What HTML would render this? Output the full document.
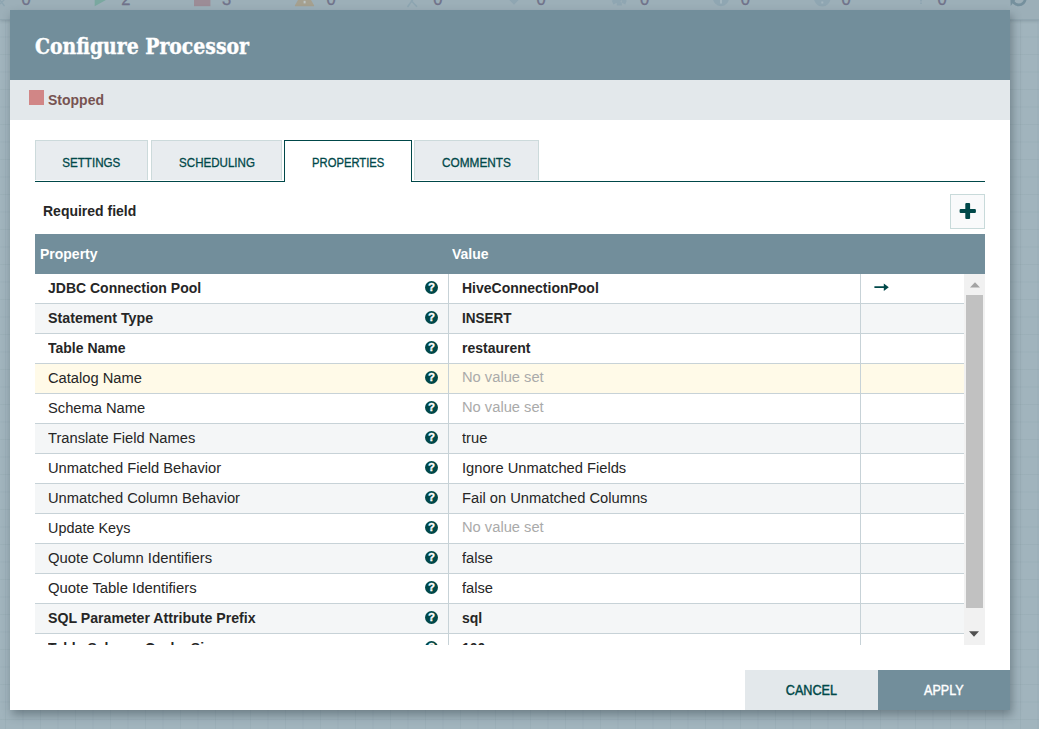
<!DOCTYPE html>
<html lang="en">
<head>
<meta charset="utf-8">
<title>Configure Processor</title>
<style>
*{box-sizing:border-box;margin:0;padding:0}
html,body{width:1039px;height:729px;overflow:hidden}
body{position:relative;font-family:"Liberation Sans",Arial,sans-serif;color:#262626;background:#a1b4bd;
  background-image:
    linear-gradient(to right, rgba(126,150,160,.17) 1px, transparent 1px),
    linear-gradient(to bottom, rgba(126,150,160,.17) 1px, transparent 1px);
  background-size:17.5px 17.5px;
  background-position:5px 1.5px;
}
.abs{position:absolute}
/* top toolbar strip (dimmed by modal glass) */
#strip{left:0;top:0;width:1039px;height:20px;background:#9cafb8;border-bottom:1px solid #91a6b0;box-shadow:0 1px 3px rgba(60,80,90,.25);overflow:hidden}
#strip span{position:absolute;top:-11.4px;font-size:16.5px;line-height:20px;color:#70728a;-webkit-text-stroke:.3px #70728a;margin-left:.9px}
#strip i{position:absolute;display:block}
/* dialog */
#dlg{left:10px;top:10px;width:1000px;height:700px;background:#fff;box-shadow:2px 5px 9px rgba(40,55,62,.42)}
#hdr{left:0;top:0;width:1000px;height:70px;background:#728e9b}
#title{left:25px;top:19.5px;font-family:"DejaVu Serif Condensed","DejaVu Serif","Liberation Serif",serif;font-stretch:condensed;font-weight:bold;font-size:22.5px;line-height:32px;color:#fff;white-space:nowrap;transform:scaleX(.93);transform-origin:0 50%;-webkit-text-stroke:.4px #fff}
#status{left:0;top:70px;width:1000px;height:40px;background:#e3e8eb}
#sq{left:19px;top:80px;width:15px;height:15px;background:#d18686}
#stopped{left:37.5px;top:80px;font-weight:bold;font-size:15.4px;transform:scaleX(.909);transform-origin:0 50%;line-height:20px;color:#775351;white-space:nowrap}
/* tabs */
.tab{top:130px;height:40px;border:1px solid #ccdadb;border-bottom:0;background:#e8ecef;color:#004849;font-size:12.5px;line-height:44px;text-align:center;white-space:nowrap;-webkit-text-stroke:.3px #004849}
.tab span,.btn span{display:inline-block;transform-origin:50% 50%}
.tab.sel{background:#fff;border-color:#004849;height:42px;z-index:2}
#tabline{left:25px;top:171px;width:950px;height:1px;background:#004849}
#req{left:32.5px;top:190px;font-weight:bold;font-size:15.4px;transform:scaleX(.909);transform-origin:0 50%;line-height:22px;white-space:nowrap;color:#262626}
#plus{left:940px;top:184px;width:35px;height:35px;border:1px solid #c8dada;background:#f9fafb}
/* table */
#thead{left:25px;top:224px;width:950px;height:40px;background:#728e9b;color:#fff;font-weight:bold;font-size:14px;line-height:40px}
#thead span{position:absolute;top:0;white-space:nowrap;font-size:15.4px;transform:scaleX(.909);transform-origin:0 50%}
#tbody{left:25px;top:264px;width:950px;height:370.5px;overflow:hidden;background:#fff}
.row{position:absolute;left:0;width:929px;height:30px;border-bottom:1px solid #c7d2d7;font-size:14.7px;line-height:29px;white-space:nowrap;color:#262626}
.row.alt{background:#f4f6f7}
.row.act{background:#fffae8}
.row.b{font-weight:bold;font-size:14px}
.c1,.c2,.c3{position:absolute;top:0;height:29px}
.c1{left:0;width:414px;border-right:1px solid #c7d2d7;padding-left:12.5px}
.c2{left:414px;width:412px;border-right:1px solid #c7d2d7;padding-left:12.5px}
.c3{left:826px;width:103px}
.t{display:inline-block;position:relative;top:0;transform:scaleX(.987);transform-origin:0 50%;font-size:14.9px}
.row.b .t{font-size:15.4px;transform:scaleX(.909);top:-1px}
.t.unset{color:#aaaaaa;top:-1px}
.q{position:absolute;left:390px;top:7px;width:13px;height:13px;border-radius:50%;background:#004849;color:#fff;font-weight:bold;font-size:11.5px;line-height:13.5px;text-align:center;letter-spacing:0;-webkit-text-stroke:.35px #fff;font-family:"Liberation Sans",Arial,sans-serif}
#sb{left:929.3px;top:0;width:20.7px;height:370.5px;background:#f1f1f1}
#thumb{left:2px;top:21px;width:17px;height:313px;background:#c1c1c1}
/* buttons */
.btn{top:660px;height:40px;font-size:14.5px;line-height:41px;text-align:center;white-space:nowrap}
#cancel{left:735px;width:133px;background:#e3e8eb;color:#004849;-webkit-text-stroke:.45px #004849}
#apply{left:868px;width:132px;background:#728e9b;color:#fff;-webkit-text-stroke:.45px #fff}
</style>
</head>
<body>
<div id="strip" class="abs">
  <span style="left:20.6px">0</span>
  <span style="left:120.4px">2</span>
  <span style="left:221.2px">3</span>
  <span style="left:325.6px">0</span>
  <span style="left:432.3px">0</span>
  <span style="left:535.7px">0</span>
  <span style="left:639px">0</span>
  <span style="left:739.8px">0</span>
  <span style="left:840.6px">0</span>
  <span style="left:936.6px">0</span>
  <svg class="abs" style="left:0;top:0" width="1039" height="20" viewBox="0 0 1039 20">
    <path d="M-1 -1 L4.5 6 M5 -1 L0 4" stroke="#8da5b1" stroke-width="1.3" fill="none"/>
    <path d="M94.7 -1 h13 L94.7 6.2 z" fill="#7aa8a0"/>
    <path d="M194 -1 h16.4 v7.2 h-16.4 z" fill="#9c8c96"/>
    <path d="M298.6 -1 h11.8 l3.6 6.2 q0.4 1 -0.8 1 h-17.4 q-1.200 0 -0.8 -1 z" fill="#a5a08f"/>
    <path d="M303.600 0.8 h2 v2.600 h-2 z" fill="#bcc5c5"/>
    <path d="M413.200 -1 L407.5 7 M411 0.500 l6 6.200" stroke="#8da5b1" stroke-width="1.500" fill="none"/>
    <path d="M508.400 -1 h11.200 L514 4.700 z" fill="#8fa6b2"/>
    <path d="M616.800 -1 h5 v6.500 h-5 z M611.800 0.500 l4.500 -1.500 2 3 -5 2.500 z M626.800 0.500 l-4.500 -1.500 -2 3 5 2.500 z" fill="#8fa6b2"/>
    <path d="M713 -2 a8 8.300 0 0 0 16 0 z" fill="#8fa6b2"/>
    <path d="M720 -1 h2 v4.500 h-2 z" fill="#a3b6bf"/>
    <path d="M814 -2 a8 8.300 0 0 0 16.500 0 z" fill="#8fa6b2"/>
    <path d="M821.300 1.500 h2 v2 h-2 z" fill="#a3b6bf"/>
    <path d="M920 0 h2 v1.500 h-2 z M920 2.500 h2 v1.500 h-2 z" fill="#8fa6b2"/>
    <path d="M1012.3 -1.7 A6.5 6.6 0 0 0 1025.3 -1.7" stroke="#75909d" stroke-width="2.7" fill="none"/>
    <path d="M1010.4 -1 H1016 L1010.7 5.9 z" fill="#75909d"/>
  </svg>
</div>

<div id="dlg" class="abs">
  <div id="hdr" class="abs"></div>
  <div id="title" class="abs">Configure Processor</div>
  <div id="status" class="abs"></div>
  <div id="sq" class="abs"></div>
  <div id="stopped" class="abs">Stopped</div>

  <div class="tab abs" style="left:25px;width:113px"><span style="transform:scaleX(.93)">SETTINGS</span></div>
  <div class="tab abs" style="left:141px;width:131px"><span style="transform:scaleX(.925)">SCHEDULING</span></div>
  <div id="tabline" class="abs"></div>
  <div class="tab sel abs" style="left:274px;width:128px"><span style="transform:scaleX(.90)">PROPERTIES</span></div>
  <div class="tab abs" style="left:404px;width:125px"><span style="transform:scaleX(.944)">COMMENTS</span></div>

  <div id="req" class="abs">Required field</div>
  <div id="plus" class="abs">
    <svg width="33" height="33" viewBox="0 0 33 33" style="display:block"><rect x="14.3" y="8.1" width="4.8" height="15.8" rx="1" fill="#004849"/><rect x="8.6" y="13.9" width="16.3" height="4.2" rx="1" fill="#004849"/></svg>
  </div>

  <div id="thead" class="abs"><span style="left:5px">Property</span><span style="left:416.6px">Value</span></div>

  <div id="tbody" class="abs">
    <div class="row b" style="top:0"><div class="c1"><span class="t">JDBC Connection Pool</span><span class="q">?</span></div><div class="c2"><span class="t">HiveConnectionPool</span></div><div class="c3"><svg width="16" height="10" viewBox="0 0 16 10" style="position:absolute;left:12.5px;top:8.4px"><path d="M0.4 4.3h10v1.7h-10z M9.8 1.4l5 3.75-5 3.75z" fill="#004849"/></svg></div></div>
    <div class="row b alt" style="top:30px"><div class="c1"><span class="t" style="transform:scaleX(.927)">Statement Type</span><span class="q">?</span></div><div class="c2"><span class="t" style="transform:scaleX(.877)">INSERT</span></div><div class="c3"></div></div>
    <div class="row b" style="top:60px"><div class="c1"><span class="t">Table Name</span><span class="q">?</span></div><div class="c2"><span class="t">restaurent</span></div><div class="c3"></div></div>
    <div class="row act" style="top:90px"><div class="c1"><span class="t">Catalog Name</span><span class="q">?</span></div><div class="c2"><span class="t unset">No value set</span></div><div class="c3"></div></div>
    <div class="row" style="top:120px"><div class="c1"><span class="t">Schema Name</span><span class="q">?</span></div><div class="c2"><span class="t unset">No value set</span></div><div class="c3"></div></div>
    <div class="row alt" style="top:150px"><div class="c1"><span class="t">Translate Field Names</span><span class="q">?</span></div><div class="c2"><span class="t">true</span></div><div class="c3"></div></div>
    <div class="row" style="top:180px"><div class="c1"><span class="t">Unmatched Field Behavior</span><span class="q">?</span></div><div class="c2"><span class="t">Ignore Unmatched Fields</span></div><div class="c3"></div></div>
    <div class="row alt" style="top:210px"><div class="c1"><span class="t">Unmatched Column Behavior</span><span class="q">?</span></div><div class="c2"><span class="t">Fail on Unmatched Columns</span></div><div class="c3"></div></div>
    <div class="row" style="top:240px"><div class="c1"><span class="t" style="transform:scaleX(.967)">Update Keys</span><span class="q">?</span></div><div class="c2"><span class="t unset">No value set</span></div><div class="c3"></div></div>
    <div class="row alt" style="top:270px"><div class="c1"><span class="t" style="transform:scaleX(.997)">Quote Column Identifiers</span><span class="q">?</span></div><div class="c2"><span class="t">false</span></div><div class="c3"></div></div>
    <div class="row" style="top:300px"><div class="c1"><span class="t" style="transform:scaleX(.999)">Quote Table Identifiers</span><span class="q">?</span></div><div class="c2"><span class="t">false</span></div><div class="c3"></div></div>
    <div class="row b alt" style="top:330px"><div class="c1"><span class="t" style="transform:scaleX(.919)">SQL Parameter Attribute Prefix</span><span class="q">?</span></div><div class="c2"><span class="t">sql</span></div><div class="c3"></div></div>
    <div class="row b" style="top:360px"><div class="c1"><span class="t">Table Schema Cache Size</span><span class="q">?</span></div><div class="c2"><span class="t">100</span></div><div class="c3"></div></div>
    <div id="sb" class="abs">
      <div id="thumb" class="abs"></div>
      <svg class="abs" style="left:5.4px;top:7.8px" width="10" height="6" viewBox="0 0 10 6"><path d="M0 5.5L5 0.3 10 5.5z" fill="#a3a3a3"/></svg>
      <svg class="abs" style="left:5.1px;top:356.5px" width="10" height="6" viewBox="0 0 10 6"><path d="M0 0.3h10L5 5.7z" fill="#505050"/></svg>
    </div>
  </div>

  <div id="cancel" class="btn abs"><span style="transform:scaleX(.87)">CANCEL</span></div>
  <div id="apply" class="btn abs"><span style="transform:scaleX(.865)">APPLY</span></div>
</div>
</body>
</html>
